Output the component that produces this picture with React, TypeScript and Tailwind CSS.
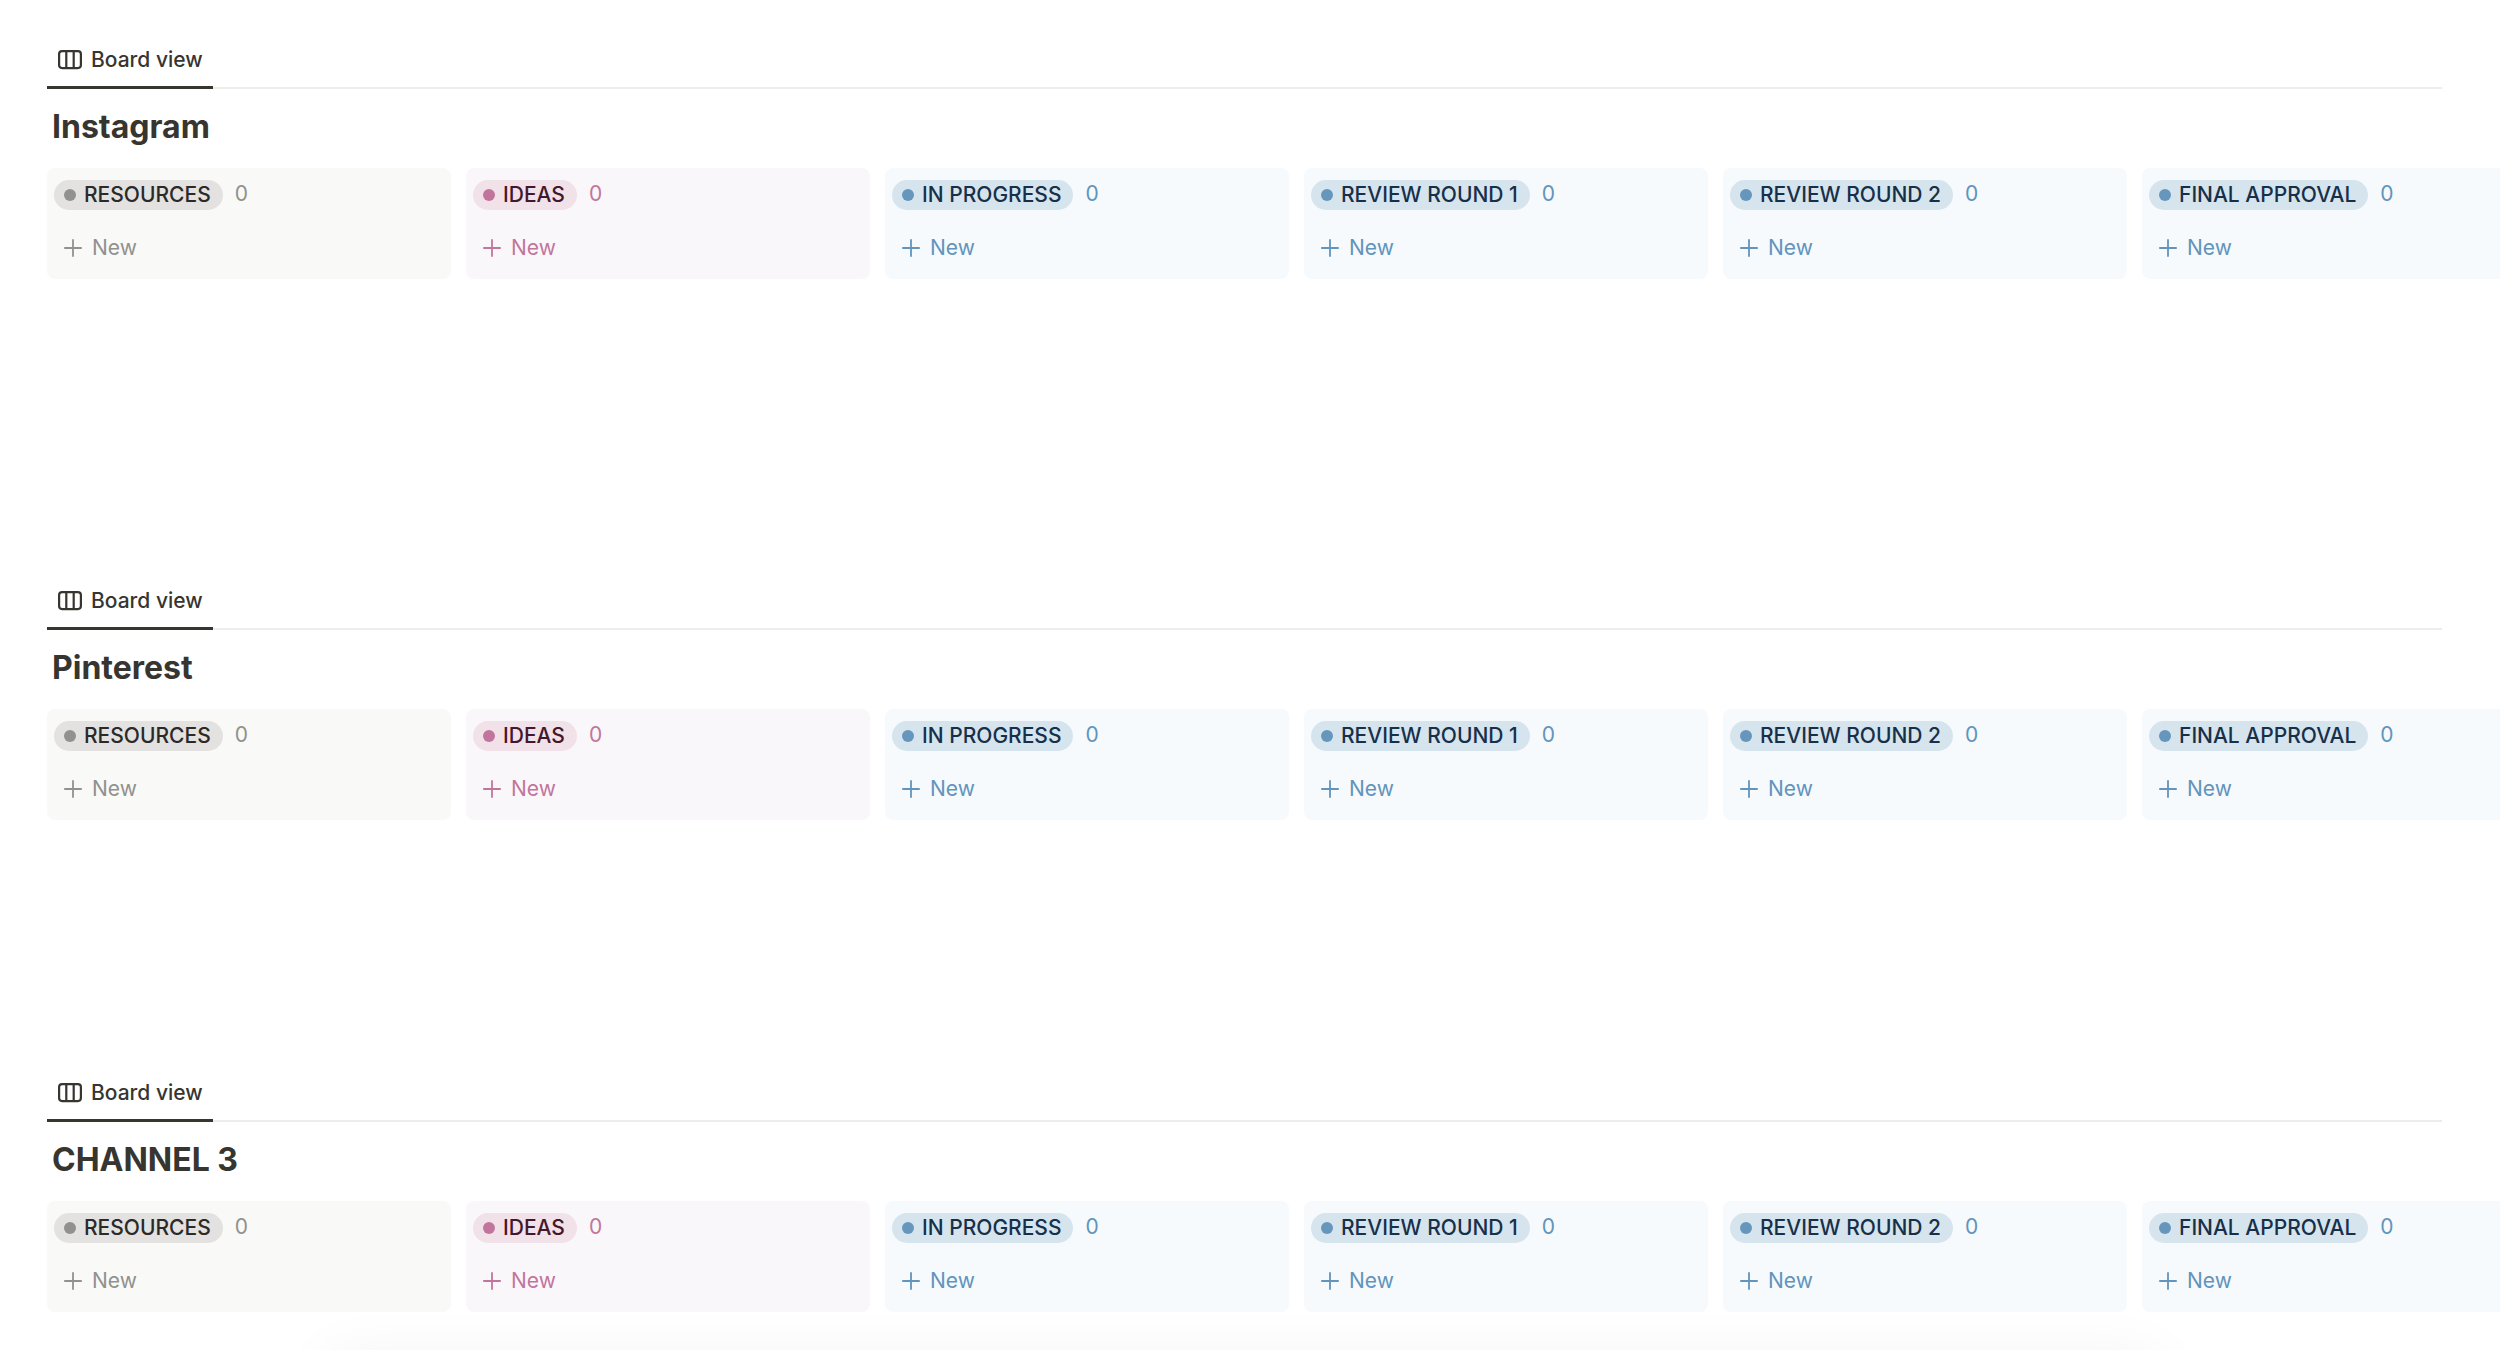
type Tone = {
  column: string;
  pill: string;
  dot: string;
  accent: string;
};

const gray: Tone = {
  column: "bg-[#f9f9f7]",
  pill: "bg-[#e3e2e0] text-[#2b2a28]",
  dot: "bg-[#91918e]",
  accent: "text-[#91918e]",
};

const pink: Tone = {
  column: "bg-[#faf7fb]",
  pill: "bg-[#f1e1e9] text-[#44182b]",
  dot: "bg-[#c2759c]",
  accent: "text-[#c2759c]",
};

const blue: Tone = {
  column: "bg-[#f6fafd]",
  pill: "bg-[#d6e4ee] text-[#17304a]",
  dot: "bg-[#6796bd]",
  accent: "text-[#6294bc]",
};

const statuses: { label: string; tone: Tone }[] = [
  { label: "RESOURCES", tone: gray },
  { label: "IDEAS", tone: pink },
  { label: "IN PROGRESS", tone: blue },
  { label: "REVIEW ROUND 1", tone: blue },
  { label: "REVIEW ROUND 2", tone: blue },
  { label: "FINAL APPROVAL", tone: blue },
];

const boards = [
  { name: "Instagram", space: "pb-[293px]" },
  { name: "Pinterest", space: "pb-[244px]" },
  { name: "CHANNEL 3", space: "pb-0" },
];

function BoardIcon() {
  return (
    <svg className="h-5 w-6" viewBox="0 0 24 20" fill="none" stroke="currentColor" strokeWidth="2.2" aria-hidden="true">
      <rect x="1.1" y="1.1" width="21.8" height="17" rx="3" />
      <path d="M8.3 1v17M15.7 1v17" />
    </svg>
  );
}

function PlusIcon() {
  return (
    <svg className="size-[18px]" viewBox="0 0 18 18" fill="none" stroke="currentColor" strokeWidth="1.8" strokeLinecap="round" aria-hidden="true">
      <path d="M9 .9v16.2M.9 9h16.2" />
    </svg>
  );
}

function Column({ label, tone }: { label: string; tone: Tone }) {
  return (
    <li className={`w-[404px] shrink-0 rounded-lg px-[7px] pt-3 pb-[9px] ${tone.column}`}>
      <div className="flex items-center gap-3">
        <h3 className={`flex h-[30px] items-center gap-2 rounded-full pr-3 pl-[10px] text-[21px] font-medium ${tone.pill}`}>
          <span className={`size-3 rounded-full ${tone.dot}`} />
          {label}
        </h3>
        <span className={`pb-[2px] text-[21px] leading-7 ${tone.accent}`}>0</span>
      </div>
      <button type="button" className={`mt-4 flex h-11 items-center gap-[10px] px-[10px] text-[21px] ${tone.accent}`}>
        <PlusIcon />
        New
      </button>
    </li>
  );
}

function Board({ name, space }: { name: string; space: string }) {
  return (
    <section className={space}>
      <div className="mr-[58px] flex border-b-2 border-[#ededec]" role="tablist">
        <button
          type="button"
          role="tab"
          aria-selected="true"
          className="-mb-[2px] flex h-[58px] items-center gap-[9px] border-b-[3px] border-[#37352f] pt-[2px] pr-[10px] pl-[11px] text-[21px] font-medium text-[#37352f]"
        >
          <BoardIcon />
          Board view
        </button>
      </div>
      <h2 className="mt-[18px] mb-[21px] pl-[5px] text-[32px] leading-10 font-bold text-[#37352f]">{name}</h2>
      <ul className="flex gap-[15px] overflow-hidden">
        {statuses.map((s) => (
          <Column key={s.label} label={s.label} tone={s.tone} />
        ))}
      </ul>
    </section>
  );
}

export default function App() {
  return (
    <main className="overflow-hidden bg-white pt-[31px] pl-[47px] font-['Inter',sans-serif]">
      {boards.map((b) => (
        <Board key={b.name} name={b.name} space={b.space} />
      ))}
      <div className="mr-[240px] ml-[180px] h-[38px] overflow-hidden px-[100px] pt-[46px]">
        <div className="h-12 rounded-lg shadow-[0_0_60px_rgba(15,15,15,0.06)]" />
      </div>
    </main>
  );
}
